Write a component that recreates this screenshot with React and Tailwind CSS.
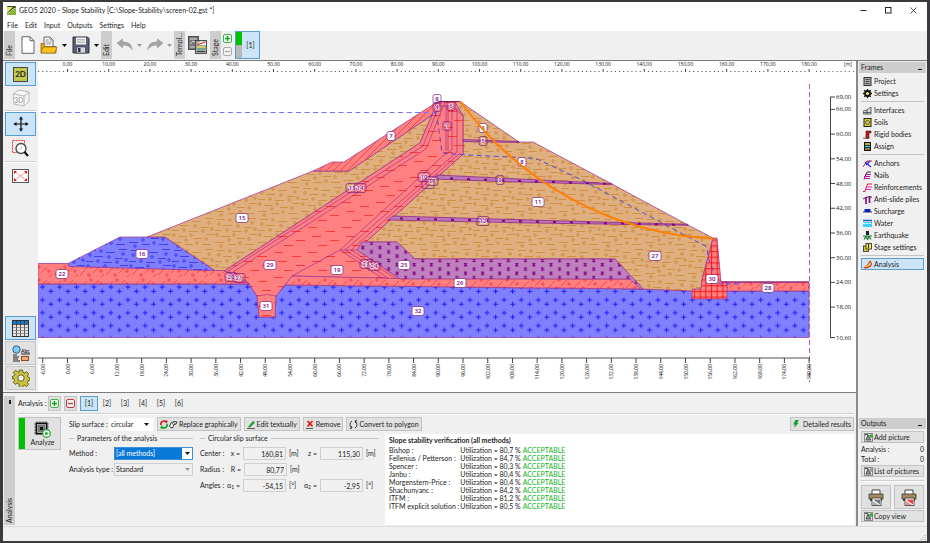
import React from 'react';

const PX = 4.12; // pixels per metre
const X0 = 67.5; // x of 0,00 m
const fmt = (n) => n.toFixed(2).replace('.', ',');

const range = (from, to, step) => {
    const out = [];
    for (let v = from; v <= to; v += step) out.push(v);
    return out;
};

/* ---------- small building blocks ---------- */

const Divider = () => <div className="h-[2px] shrink-0 border-b border-white bg-[#cfcfcf]" />;

const VerticalLabel = ({ children }) => (
    <div className="flex w-[11px] shrink-0 justify-center self-stretch bg-[#cdcdcd] pb-[3px]">
        <span className="rotate-180 text-start leading-[11px] [writing-mode:vertical-rl]">{children}</span>
    </div>
);

const Button = ({ className = '', children, ...rest }) => (
    <button
        type="button"
        className={`flex items-center border border-[#c3c3c3] bg-[#e1e1e1] whitespace-nowrap ${className}`}
        {...rest}
    >
        {children}
    </button>
);

const Arrow = ({ color = '#111' }) => (
    <svg width="5" height="3" viewBox="0 0 5 3" className="shrink-0">
        <path d="M0 0h5L2.500 3z" fill={color} />
    </svg>
);

const PlusIcon = () => (
    <svg width="9" height="9" viewBox="0 0 9 9">
        <rect x=".5" y=".5" width="8" height="8" rx="1.500" fill="#f4fff4" stroke="#3fae49" />
        <path d="M4.500 2v5M2 4.500h5" stroke="#12a01f" strokeWidth="1.400" />
    </svg>
);

const MinusIcon = ({ color = '#c0393f' }) => (
    <svg width="9" height="9" viewBox="0 0 9 9">
        <rect x=".5" y=".5" width="8" height="8" rx="1.500" fill="#f7f2f2" stroke={color} />
        <path d="M2 4.500h5" stroke={color} strokeWidth="1.300" />
    </svg>
);

/* ---------- title, menu, toolbar ---------- */

const TitleBar = () => (
    <header className="flex h-[17px] items-center bg-white pl-1">
        <svg width="9" height="9" viewBox="0 0 9 9" className="mr-[3px]">
            <rect width="9" height="9" rx="1" fill="#2f4a1c" />
            <path d="M0 1h6L1 6H0z" fill="#e4e86a" />
            <path d="M0 7C4 7 4 3 9 2v5.500Q9 9 8 9H1Q0 9 0 8z" fill="#8cb43a" />
            <path d="M0 7C4 7 4 3 9 2" stroke="#fff" strokeWidth=".7" fill="none" />
        </svg>
        <h1 className="grow">GEO5 2020 - Slope Stability [C:\Slope-Stability\screen-02.gst *]</h1>
        <div className="flex gap-[13px] pr-2">
            <button type="button" aria-label="Minimize" className="flex size-3 items-center justify-center">
                <svg width="7" height="7" viewBox="0 0 7 7"><path d="M.5 3.500h6" stroke="#222" /></svg>
            </button>
            <button type="button" aria-label="Maximize" className="flex size-3 items-center justify-center">
                <svg width="7" height="7" viewBox="0 0 7 7"><rect x=".5" y=".5" width="5.500" height="5.500" fill="none" stroke="#222" /></svg>
            </button>
            <button type="button" aria-label="Close" className="flex size-3 items-center justify-center">
                <svg width="7" height="7" viewBox="0 0 7 7"><path d="M.5.5l6 6M6.500.5l-6 6" stroke="#222" strokeWidth=".8" /></svg>
            </button>
        </div>
    </header>
);

const MenuBar = () => (
    <nav className="flex h-3 items-center gap-[7px] bg-white pl-1">
        {['File', 'Edit', 'Input', 'Outputs', 'Settings', 'Help'].map((m) => (
            <button key={m} type="button">{m}</button>
        ))}
    </nav>
);

const NewIcon = () => (
    <svg width="14" height="18" viewBox="0 0 14 18">
        <path d="M1 .7h8l4 4v12.600H1z" fill="#fff" stroke="#555" strokeWidth=".9" />
        <path d="M9 .7v4h4" fill="none" stroke="#555" strokeWidth=".9" />
    </svg>
);

const OpenIcon = () => (
    <svg width="18" height="18" viewBox="0 0 18 18">
        <path d="M4 12V1h6l3 3v9" fill="#fff" stroke="#555" strokeWidth=".9" />
        <path d="M10 1v3h3M5.500 4h3M5.500 6h6M5.500 8h6" fill="none" stroke="#777" strokeWidth=".8" />
        <path d="M1 7.500h3l1 3h11V17H1z" fill="#f0a810" stroke="#7a5a10" strokeWidth=".7" />
        <path d="M3 11h14l-2 6H1z" fill="#ffc21c" stroke="#7a5a10" strokeWidth=".6" />
    </svg>
);

const SaveIcon = () => (
    <svg width="18" height="18" viewBox="0 0 18 18">
        <path d="M1 1h14.500L17 2.500V17H1z" fill="#5a5f78" stroke="#2b2e3c" />
        <rect x="4" y="1.500" width="10" height="7" fill="#f3f3f3" />
        <path d="M5 3.500h8M5 5h8M5 6.500h8" stroke="#999" strokeWidth=".6" />
        <rect x="4.500" y="11" width="9" height="6" fill="#d8d8dc" stroke="#2b2e3c" strokeWidth=".6" />
        <rect x="6" y="12" width="2.500" height="4" fill="#2b2e3c" />
    </svg>
);

const UndoIcon = ({ flip = false }) => (
    <svg width="18" height="14" viewBox="0 0 18 14" className={flip ? '-scale-x-100' : ''}>
        <path d="M.5 5L7 .5v3c6 0 9.500 3 9.500 9.500C14.500 9 12 7.500 7 7.500v3z" fill="#a3a3a3" />
    </svg>
);

const TemplateIcon = () => (
    <svg width="19" height="18" viewBox="0 0 19 18">
        <rect x=".5" y=".5" width="10" height="13" fill="#777" stroke="#333" strokeWidth=".8" />
        <path d="M2 3h7M2 8l3-3 3 2M2 11h5" stroke="#ddd" strokeWidth="1" fill="none" />
        <rect x="7.500" y="4.500" width="11" height="13" fill="#a9a9a9" stroke="#333" strokeWidth=".8" />
        <path d="M9 9l4-4 5 1v3z" fill="#f4f4f4" />
        <path d="M9 9l8-3" stroke="#d33" strokeWidth="1.200" />
        <path d="M9 11h8" stroke="#e8d44a" strokeWidth="1.500" />
        <path d="M9 13h8" stroke="#3a8" strokeWidth="1" />
        <path d="M9 15.500h8" stroke="#333" strokeWidth="1" />
    </svg>
);

const Toolbar = () => (
    <div className="flex h-[30px] items-center border-b border-[#7c7c7c] bg-[#f0f0f0] pb-px pl-px">
        <VerticalLabel>File</VerticalLabel>
        <div className="flex w-[86px] items-center justify-between pr-[2px] pl-[6px]">
            <button type="button" aria-label="New"><NewIcon /></button>
            <button type="button" aria-label="Open"><OpenIcon /></button>
            <Arrow />
            <button type="button" aria-label="Save"><SaveIcon /></button>
            <Arrow />
        </div>
        <VerticalLabel>Edit</VerticalLabel>
        <div className="flex w-[62px] items-center justify-between pr-[2px] pl-1">
            <button type="button" aria-label="Undo"><UndoIcon /></button>
            <Arrow color="#9a9a9a" />
            <button type="button" aria-label="Redo"><UndoIcon flip /></button>
            <Arrow color="#9a9a9a" />
        </div>
        <VerticalLabel>Templ...</VerticalLabel>
        <button type="button" aria-label="Templates" className="px-[3px]"><TemplateIcon /></button>
        <VerticalLabel>Stage</VerticalLabel>
        <div className="flex flex-col gap-1 px-[2px]">
            <button type="button" aria-label="Add stage"><PlusIcon /></button>
            <button type="button" aria-label="Remove stage"><MinusIcon color="#a9a9a9" /></button>
        </div>
        <button type="button" className="ml-px flex w-[25px] self-stretch border border-[#5a9bd0] bg-[#cce4f7]">
            <span className="flex h-full w-[6px] flex-col">
                <span className="grow bg-[#00c000]" />
                <span className="grow bg-[#b9b9b9]" />
            </span>
            <span className="grow self-center">[1]</span>
        </button>
    </div>
);

/* ---------- left tools ---------- */

const Tool = ({ label, active, raised, children }) => (
    <button
        type="button"
        aria-label={label}
        className={`flex h-6 w-full shrink-0 items-center justify-center border ${
            active ? 'border-[#5a9bd0] bg-[#cce4f7]' : raised ? 'border-[#c6c6c6] bg-[#e1e1e1]' : 'border-transparent'
        }`}
    >
        {children}
    </button>
);

const LeftTools = () => (
    <div className="flex w-[35px] shrink-0 flex-col bg-[#f0f0f0] px-[2px] pt-px pb-[2px]">
        <Tool label="2D" active>
            <span className="flex size-[15px] items-center justify-center border border-[#444] bg-[#c6c84a] text-[8px] leading-none font-bold text-[#222]">2D</span>
        </Tool>
        <Tool label="3D">
            <svg width="18" height="18" viewBox="0 0 18 18" fill="none" stroke="#b0b0b0" strokeWidth=".9">
                <path d="M1 5l11 2v10L2 15zM1 5l6-4 10 2-5 4M17 3v9l-5 5" fill="#f8f8f8" />
                <text x="2" y="14" fontSize="7" fontWeight="700" fill="#aaa" stroke="none">3D</text>
            </svg>
        </Tool>
        <Divider />
        <Tool label="Pan" active>
            <svg width="16" height="16" viewBox="0 0 16 16" stroke="#111" fill="#111">
                <path d="M8 2v12M2 8h12" strokeWidth="1.200" />
                <path d="M8 .3L10 3.500H6zM8 15.700L6 12.500h4zM.3 8L3.500 6v4zM15.700 8L12.500 10V6z" stroke="none" />
            </svg>
        </Tool>
        <Tool label="Zoom window">
            <svg width="17" height="17" viewBox="0 0 17 17" fill="none">
                <rect x=".5" y=".5" width="12" height="12" stroke="#f22" strokeDasharray="2 1" />
                <circle cx="9" cy="8.500" r="5" stroke="#444" strokeWidth="1.300" fill="#fff" />
                <path d="M6.500 9h3V6" stroke="#ccc" />
                <path d="M12.500 12l3.500 4" stroke="#111" strokeWidth="2" />
            </svg>
        </Tool>
        <div className="my-px"><Divider /></div>
        <Tool label="Fit to view">
            <svg width="17" height="14" viewBox="0 0 17 14" fill="none">
                <rect x=".5" y=".5" width="16" height="13" fill="#fff" stroke="#555" />
                <path d="M3 3l11 8M14 3L3 11" stroke="#f55" strokeWidth=".8" strokeDasharray="3 1" />
                <path d="M2 2h3L2 5zM15 2v3l-3-3zM2 12V9l3 3zM15 12h-3l3-3z" fill="#f00" />
            </svg>
        </Tool>
        <div className="mt-auto flex flex-col gap-px">
            <Tool label="Table" active>
                <svg width="17" height="17" viewBox="0 0 17 17">
                    <rect x=".5" y=".5" width="16" height="16" fill="#e6e6e6" stroke="#333" />
                    <rect x="1" y="1" width="15" height="3" fill="#1477c8" />
                    <path d="M4.500 1v15M8.500 1v15M12.500 1v15M1 4.500h15" stroke="#333" strokeWidth=".8" />
                    <path d="M1 7.500h15M1 10.500h15M1 13.500h15" stroke="#777" strokeWidth=".7" />
                </svg>
            </Tool>
            <Tool label="Drawing settings" raised>
                <svg width="18" height="17" viewBox="0 0 18 17">
                    <circle cx="4.500" cy="4.500" r="3.700" fill="#7cc8ff" stroke="#33658a" />
                    <text x="9" y="8" fontSize="5" fontWeight="700" fill="#222">Abc</text>
                    <path d="M9 9h9M1 10h4M1 12h6M1 14h5M1 16h7" stroke="#222" />
                    <rect x="9.500" y="11.500" width="7" height="4" fill="#f7a877" stroke="#8a4a22" />
                </svg>
            </Tool>
            <Tool label="Settings" raised>
                <svg width="18" height="18" viewBox="0 0 18 18">
                    <g fill="#c9c33e" stroke="#55531a" strokeWidth=".9">
                        <path d="M7.500 1h3l.5 2.300 1.700.7 2-1.200 2 2-1.200 2 .7 1.700 1.800.5v2l-2 .7-.6 1.700 1.200 2-2 2-2-1.200-1.800.8-.5 2H7.500L7 15l-1.700-.8-2 1.200-2-2 1.200-2L1.800 9.700 0 9.200v-1.500l2-.7.6-1.700-1.200-2 2-2 2 1.200L7 3.300z" />
                        <circle cx="9" cy="9" r="3.200" fill="#f0f0f0" />
                    </g>
                </svg>
            </Tool>
        </div>
    </div>
);

/* ---------- model canvas ---------- */

const Gravel = ({ id, color }) => (
    <pattern id={id} width="43" height="31" patternUnits="userSpaceOnUse">
        <g fill="none" stroke={color} strokeWidth=".6">
            <path d="M2 2.500h8M20 4.500h9M33 1.500h8M8 8.500h9M29 10.500h8M0 13.500h7M17 14.500h9M34 17.500h8M6 19.500h9M22 21.500h8M0 25.500h9M13 27.500h8M30 27.500h9" />
            <circle cx="15" cy="3" r="1.300" />
            <circle cx="37" cy="6" r="1.300" />
            <circle cx="4" cy="7" r="1.300" />
            <circle cx="23" cy="9" r="1.300" />
            <circle cx="12" cy="13" r="1.300" />
            <circle cx="31" cy="14" r="1.300" />
            <circle cx="40" cy="12" r="1.300" />
            <circle cx="2" cy="18" r="1.300" />
            <circle cx="19" cy="18" r="1.300" />
            <circle cx="34" cy="22" r="1.300" />
            <circle cx="14" cy="23" r="1.300" />
            <circle cx="25" cy="26" r="1.300" />
            <circle cx="6" cy="29" r="1.300" />
        </g>
    </pattern>
);

const regions = [
    { fill: '#8080ff', hatch: 'url(#plus)', d: 'M38 284H249L257 296L259 317H275L276 296L285 285L460 287L520 288L643 289L692 291H809V337.500H38z' },
    { fill: '#ff8080', hatch: 'url(#clay)', d: 'M38 263.500H68L69 266L215 270.500H225L249 284H38z' },
    { fill: '#8080ff', hatch: 'url(#gravelBlue)', d: 'M68 263.500L120 237H165L215 270.500L69 266.500z' },
    { fill: '#dfaf80', hatch: 'url(#gravel)', d: 'M147 237L313 171H349L432 115L420 143L225 270.500H215L165 237z' },
    { fill: '#ff8080', hatch: 'url(#slant)', d: 'M313 171L332 162H344L437 102L440 104L432 115L349 171z' },
    { fill: '#dfaf80', hatch: 'url(#gravel)', d: 'M460 101.500L519 142H533L612 184L688 225L713 238L702 280L701 289L692 291L643 289L615 259H415L397 242H362L357 250L463 154V116L455 102z' },
    { fill: '#ff8080', hatch: 'url(#dash)', d: 'M225 270.500L420 143L433 113L437 102H455L463 116V154L357 250L400 279L292 276L285 285L276 296L275 317H259L257 296L249 284z' },
    { fill: '#ff8080', hatch: 'url(#clay)', d: 'M292 276L400 278.500L630 279L643 289L460 287L285 285z' },
    { fill: '#bf80bf', hatch: 'url(#star)', d: 'M357 250L362 242H397L415 259H615L643 289H640L630 279H400z' },
    { fill: '#ff8080', hatch: 'url(#clay)', d: 'M721 282H809V291H727z' },
    { fill: '#ff8080', hatch: 'url(#grid)', d: 'M713 238H717L721 282H727V299H692V289H701L702 280z' },
];

// filter layers, core lines and berm boundaries
const seams = [
    'M228 271L423 146L436 113L440 104',
    'M233 272L426 149L441 112L445 103',
    'M225 270.500L240 284M228 271L245 284M233 272L250 284',
    'M340 250L443 156L452 150V106M345 250L457 152V108M351 250L460 153M340 250H357',
    'M340 250L382 278M345 250L388 278M351 250L395 278',
    'M292 276L340 250M258 296Q266 293 276 296',
    'M446 106V151M448 106V151M437 106H452L463 116',
];

const bands = [
    'M463 139.500L519 141.500V142.500L463 141.500z',
    'M437 175L500 178L612 183.500V184.500L500 181.500L434 179z',
    'M393 216L530 220L688 224.300V225.300L530 223L388 220z',
];

const tags = [
    [437, 99, '8', 0], [391, 136, '7', 1], [242, 218, '15', 1], [142, 254, '16', 1], [62, 274, '22', 1],
    [270, 265, '29', 1], [266, 306, '31', 1], [337, 270, '19', 1], [404, 265, '25', 1], [460, 283, '26', 1],
    [418, 311, '32', 1], [538, 202, '11', 1], [655, 256, '27', 1], [712, 279, '30', 1], [768, 288, '28', 1],
    [483, 128, '3', 1], [483, 141, '5', 0], [500, 180, '9', 0], [483, 221, '12', 0], [522, 162, '8', 1],
    [447, 126, '1', 0], [437, 107, '4', 0], [451, 106, '6', 0], [352, 188, '13', 0], [360, 188, '14', 0],
    [424, 177, '10', 0], [432, 181, '17', 0], [428, 184, '', 0], [231, 277, '20', 0], [239, 278, '21', 0],
    [366, 264, '23', 0], [374, 266, '24', 0],
];

const Tag = ({ x, y, text, solid }) => {
    const w = text.length === 1 ? 8 : 12;
    return (
        <g>
            <rect x={x - w / 2} y={y - 4.5} width={w} height="9" rx="2" fill={solid ? '#fff' : 'none'} stroke="#80207f" strokeWidth=".7" />
            <text x={x} y={y + 2} fontSize="6" fontWeight="600" textAnchor="middle" fill="#800080" stroke={solid ? 'none' : '#fff'} strokeWidth="1.200" paintOrder="stroke">{text}</text>
        </g>
    );
};

const ModelCanvas = () => (
    <svg viewBox="38 61 818 331" className="h-auto w-full bg-white font-['Open_Sans',sans-serif]" role="img" aria-label="Slope model">
        <defs>
            <Gravel id="gravel" color="#c87818" />
            <Gravel id="gravelBlue" color="#1010f0" />
            <pattern id="plus" width="17.100" height="12.900" x="209" y="283" patternUnits="userSpaceOnUse">
                <path d="M2 4h5M4.500 1.500v5M10.500 8.300h5M13 5.800v5" stroke="#1010ff" strokeWidth=".9" />
            </pattern>
            <pattern id="star" width="17.100" height="8.600" x="367" y="241" patternUnits="userSpaceOnUse">
                <path d="M3 .8l3 3M6 .8l-3 3M4.500.5v3.600M11.500 5l3 3M14.500 5l-3 3M13 4.700v3.600" stroke="#800080" strokeWidth="1" />
            </pattern>
            <pattern id="dash" width="34" height="25" patternUnits="userSpaceOnUse">
                <path d="M2 2.500h9M20 6.500h9M6 11.500h9M24 15.500h9M12 20.500h9" stroke="#ff1818" strokeWidth=".7" />
            </pattern>
            <pattern id="clay" width="26" height="13" y="264" patternUnits="userSpaceOnUse">
                <g fill="none" stroke="#ff1818" strokeWidth=".6">
                    <path d="M2 11L9 4M15 9l6-6M23 13l3-3" />
                    <circle cx="13" cy="3" r="1.200" />
                    <circle cx="11" cy="11" r="1.200" />
                    <circle cx="23" cy="7" r="1.200" />
                </g>
            </pattern>
            <pattern id="slant" width="7" height="7" patternUnits="userSpaceOnUse">
                <path d="M-1 8L8-1M-1 1l2-2M6 8l2-2" stroke="#e82020" strokeWidth=".6" />
            </pattern>
            <pattern id="grid" width="5.700" height="5.700" x="692" y="289" patternUnits="userSpaceOnUse">
                <path d="M0 2.500h5.700M2.500 0v5.700" stroke="#ff0000" strokeWidth=".8" />
            </pattern>
        </defs>

        {regions.map((r) => (
            <g key={r.d}>
                <path d={r.d} fill={r.fill} />
                <path d={r.d} fill={r.hatch} stroke="#98308f" strokeWidth=".7" />
            </g>
        ))}
        {seams.map((d) => <path key={d} d={d} fill="none" stroke="#98208f" strokeWidth=".6" />)}
        {bands.map((d) => <path key={d} d={d} fill="#b878b8" stroke="#800080" strokeWidth=".6" />)}
        <path d="M450 178.500L612 184M400 218.500L688 225" stroke="#800080" strokeWidth="2" strokeDasharray="3 14" />

        {/* water table */}
        <path d="M41 112.500H435" stroke="#7474ff" strokeDasharray="5 3.500" fill="none" />
        <path d="M435 112L438 123L442 153L467 155L530 158L537 159L580 179L707 247L708 257L717 280L720 284H740" stroke="#4040e0" strokeWidth=".9" strokeDasharray="5 3.500" fill="none" />

        <path d="M437 101.500H460M721 282H809" stroke="#80106a" strokeWidth="1.200" />
        <path d="M809.500 84V382" stroke="#b060b0" strokeDasharray="5 3" />

        {tags.map(([x, y, t, solid]) => <Tag key={`${x}-${y}`} x={x} y={y} text={t} solid={solid} />)}

        {/* critical slip surface, R = 80,77 m */}
        <path d="M460 101A332.800 332.800 0 0 0 713 238.500" fill="none" stroke="#ff8000" strokeWidth="2" />

        {/* top ruler */}
        <g fill="#111" fontSize="5" textAnchor="middle">
            {range(-7, 180, 1).map((v) => (
                <path key={v} d={`M${X0 + v * PX} ${v % 10 === 0 ? 69 : 71}V72`} stroke="#333" strokeWidth=".9" />
            ))}
            {range(0, 180, 10).map((v) => <text key={v} x={X0 + v * PX} y="66">{fmt(v)}</text>)}
            <text x="848" y="66">[m]</text>
            <path d="M816 71.500H856" stroke="#555" strokeDasharray="1 3.100" />
        </g>

        {/* elevation ruler */}
        <g fill="#111" fontSize="6" stroke="none">
            <path d="M830.500 97V337.500" stroke="#444" />
            {[69, 66, 60, 54, 48, 42, 36, 30, 24, 18, 10.6].map((v) => (
                <g key={v}>
                    <path d={`M830 ${97 + (69 - v) * PX}h5`} stroke="#444" />
                    <text x="836" y={99 + (69 - v) * PX}>{fmt(v)}</text>
                </g>
            ))}
        </g>

        {/* bottom ruler */}
        <g fill="#111" fontSize="5" textAnchor="end">
            <path d="M38 358H809" stroke="#555" />
            {range(-6, 180, 6).map((v) => (
                <g key={v}>
                    <path d={`M${X0 + v * PX} 358v5`} stroke="#444" />
                    <text transform={`translate(${X0 + v * PX + 2} 364) rotate(-90)`}>{fmt(v)}</text>
                </g>
            ))}
        </g>
    </svg>
);

/* ---------- analysis panel ---------- */

const GroupTitle = ({ children }) => (
    <h2 className="flex items-center gap-[3px] whitespace-nowrap">
        <span className="h-px w-[5px] bg-[#c4c4c4]" />
        {children}
        <span className="h-px grow bg-[#c4c4c4]" />
    </h2>
);

const NumberField = ({ id, label, value, unit }) => (
    <div className="flex items-center">
        <label htmlFor={id} className="w-[17px] shrink-0 pr-[3px] text-right whitespace-nowrap">{label} =</label>
        <input
            id={id}
            readOnly
            defaultValue={value}
            className="h-[13px] w-[43px] border border-[#cfcfcf] bg-[#f0f0f0] px-[2px] text-right"
        />
        <span className="w-[15px] pl-[3px]">{unit}</span>
    </div>
);

const results = [
    ['Bishop :', '80,7'],
    ['Fellenius / Petterson :', '84,7'],
    ['Spencer :', '80,3'],
    ['Janbu :', '80,4'],
    ['Morgenstern-Price :', '80,4'],
    ['Shachunyanc :', '84,2'],
    ['ITFM :', '81,2'],
    ['ITFM explicit solution :', '80,5'],
];

const AnalysisPanel = () => (
    <section className="flex h-[134px] border-t border-[#7c7c7c] bg-[#f0f0f0] pt-[3px] pr-[2px] pb-px pl-px">
        <div className="flex w-[11px] shrink-0 flex-col items-center justify-between bg-[#cdcdcd] pt-1 pb-[2px]">
            <span className="h-1 w-[2px] bg-[#222]" />
            <span className="rotate-180 leading-[11px] [writing-mode:vertical-rl]">Analysis</span>
        </div>
        <div className="ml-[3px] flex min-w-0 grow flex-col">
            <div className="flex h-[15px] items-center gap-[3px]">
                <span className="w-[27px] whitespace-nowrap">Analysis :</span>
                <Button aria-label="Add analysis" className="h-[15px] w-[13px] justify-center"><PlusIcon /></Button>
                <Button aria-label="Remove analysis" className="h-[15px] w-[13px] justify-center"><MinusIcon /></Button>
                <div className="flex">
                    {[1, 2, 3, 4, 5, 6].map((n) => (
                        <button
                            key={n}
                            type="button"
                            className={`h-[15px] w-[18px] border ${n === 1 ? 'border-[#5a9bd0] bg-[#cce4f7]' : 'border-transparent'}`}
                        >
                            [{n}]
                        </button>
                    ))}
                </div>
            </div>
            <div className="mt-[2px]"><Divider /></div>

            <div className="mt-[2px] flex grow gap-2">
                <Button className="h-[33px] w-[43px] shrink-0">
                    <span className="h-full w-[6px] bg-[#00c000]" />
                    <span className="flex grow flex-col items-center">
                        <svg width="17" height="17" viewBox="0 0 17 17">
                            <path d="M3 0v14M6 0v14M9 0v14M12 0v14M0 3h15M0 6h15M0 9h15M0 12h15" stroke="#555" strokeWidth=".8" />
                            <rect x="1.500" y="1.500" width="12" height="12" fill="#111" />
                            <rect x="3.500" y="3.500" width="8" height="8" fill="#777" stroke="#ccc" strokeWidth=".7" />
                            <rect x="6" y="6" width="3" height="3" fill="#111" />
                            <circle cx="12.500" cy="12.500" r="3.800" fill="#fff" stroke="#12a01f" strokeWidth="1.200" />
                            <path d="M11.300 10.500l3.500 2-3.500 2z" fill="#12a01f" />
                        </svg>
                        <span className="leading-[9px]">Analyze</span>
                    </span>
                </Button>

                <div className="flex min-w-0 grow flex-col">
                    <div className="flex h-[14px] items-center gap-[3px]">
                        <label htmlFor="slip" className="w-[37px] whitespace-nowrap">Slip surface :</label>
                        <div className="relative mr-px">
                            <select id="slip" defaultValue="circular" className="block h-[13px] w-[44px] appearance-none bg-white pl-[2px]">
                                <option>circular</option>
                                <option>polygonal</option>
                            </select>
                            <span className="pointer-events-none absolute top-[5px] right-1"><Arrow /></span>
                        </div>
                        <Button className="h-[14px] gap-px px-[2px]">
                            <svg width="18" height="9" viewBox="0 0 18 9" fill="none">
                                <path d="M1 5a3 3 0 0 1 5-3" stroke="#c22" strokeWidth="1.600" />
                                <path d="M7 4a3 3 0 0 1-5 3" stroke="#12a01f" strokeWidth="1.600" />
                                <path d="M5 0l3 1-2 3z" fill="#c22" />
                                <path d="M3 9L0 8l2-3z" fill="#12a01f" />
                                <path d="M9.500 6.500L11 3l3-1.500 3 .5-1 2-2 .5-1.500 3.500-1.500-.5z" fill="#fff" stroke="#222" strokeWidth=".9" />
                                <path d="M12 3.500l1.500 1M13.500 2.500l1.500 1" stroke="#222" strokeWidth=".8" />
                            </svg>
                            Replace graphically
                        </Button>
                        <Button className="h-[14px] gap-px px-[2px]">
                            <svg width="9" height="9" viewBox="0 0 9 9">
                                <path d="M1 7l5-6 2 1.500-5 5z" fill="#1a9a2a" />
                                <path d="M0 8.500h8" stroke="#333" strokeWidth=".8" />
                            </svg>
                            Edit textually
                        </Button>
                        <Button className="h-[14px] gap-[2px] px-[2px]">
                            <svg width="8" height="9" viewBox="0 0 8 9">
                                <path d="M1.500 1l5 5.500M6.500 1l-5 5.500" stroke="#e01010" strokeWidth="1.600" />
                                <path d="M0 8.500h7" stroke="#333" strokeWidth=".8" />
                            </svg>
                            Remove
                        </Button>
                        <Button className="h-[14px] gap-px px-[2px]">
                            <svg width="9" height="9" viewBox="0 0 9 9" fill="none" stroke="#222" strokeWidth=".9">
                                <path d="M3 1Q1 2 1 4.500T3 8M6 1q2 1 2 3.500T6 8" />
                                <path d="M2 6l1 2-2 .5M7 3L6 1l2-.5" />
                            </svg>
                            Convert to polygon
                        </Button>
                        <Button className="ml-auto h-[14px] gap-1 px-[2px]">
                            <svg width="6" height="8" viewBox="0 0 6 8"><path d="M2.500 0H6L4 3h1.500L1 8l1-3.500H0z" fill="#12a01f" /></svg>
                            Detailed results
                        </Button>
                    </div>

                    <div className="mt-[3px] flex grow gap-[7px]">
                        <div className="w-[124px] shrink-0">
                            <GroupTitle>Parameters of the analysis</GroupTitle>
                            <div className="mt-1 flex flex-col gap-[3px]">
                                <div className="flex items-center">
                                    <label htmlFor="method" className="w-[45px]">Method :</label>
                                    <div className="relative grow">
                                        <select id="method" defaultValue="[all methods]" className="block h-[13px] w-full appearance-none border border-[#3c8fd8] bg-white bg-linear-to-r from-[#0a78d7] from-[67px] to-white to-[67px] bg-no-repeat pl-px text-white">
                                            <option>[all methods]</option>
                                            <option>Bishop</option>
                                        </select>
                                        <span className="pointer-events-none absolute top-[5px] right-[3px]"><Arrow /></span>
                                    </div>
                                </div>
                                <div className="flex items-center">
                                    <label htmlFor="type" className="w-[45px] whitespace-nowrap">Analysis type :</label>
                                    <div className="relative grow">
                                        <select id="type" defaultValue="Standard" className="block h-[13px] w-full appearance-none border border-[#cfcfcf] bg-[#f0f0f0] pl-px">
                                            <option>Standard</option>
                                            <option>Optimization</option>
                                        </select>
                                        <span className="pointer-events-none absolute top-[5px] right-[3px]"><Arrow color="#999" /></span>
                                    </div>
                                </div>
                            </div>
                        </div>

                        <div className="w-[178px] shrink-0">
                            <GroupTitle>Circular slip surface</GroupTitle>
                            <div className="mt-1 flex flex-col gap-[3px]">
                                <div className="flex items-center">
                                    <span className="w-[27px]">Center :</span>
                                    <NumberField id="cx" label="x" value="160,81" unit="[m]" />
                                    <span className="w-[2px]" />
                                    <NumberField id="cz" label="z" value="115,30" unit="[m]" />
                                </div>
                                <div className="flex items-center">
                                    <span className="w-[27px]">Radius :</span>
                                    <NumberField id="radius" label="R" value="80,77" unit="[m]" />
                                </div>
                                <div className="flex items-center">
                                    <span className="w-[27px]">Angles :</span>
                                    <NumberField id="a1" label={<>α<sub>1</sub></>} value="-54,15" unit="[°]" />
                                    <span className="w-[2px]" />
                                    <NumberField id="a2" label={<>α<sub>2</sub></>} value="-2,95" unit="[°]" />
                                </div>
                            </div>
                        </div>

                        <div className="grow bg-white px-1 pt-[2px] leading-[8px]">
                            <table className="border-collapse">
                                <caption className="pb-[2px] text-left font-bold whitespace-nowrap">Slope stability verification (all methods)</caption>
                                <tbody>
                                    {results.map(([name, value]) => (
                                        <tr key={name}>
                                            <th scope="row" className="w-[70px] p-0 pr-px text-left font-normal whitespace-nowrap">{name}</th>
                                            <td className="p-0 pr-[2px] whitespace-nowrap">Utilization = {value} %</td>
                                            <td className="p-0 text-[#12b422]">ACCEPTABLE</td>
                                        </tr>
                                    ))}
                                </tbody>
                            </table>
                        </div>
                    </div>
                </div>
            </div>
        </div>
    </section>
);

/* ---------- right side ---------- */

const frameIcons = {
    Project: <><rect x="1" y=".5" width="7" height="8" fill="#aaa" stroke="#333" /><path d="M2.500 2.500h4M2.500 4.500h4M2.500 6.500h4" stroke="#333" strokeWidth=".8" /></>,
    Settings: <><circle cx="4.500" cy="4.500" r="3.400" fill="#111" /><path d="M4.500 0v9M0 4.500h9M1.300 1.300l6.400 6.400M7.700 1.300L1.300 7.700" stroke="#111" strokeWidth="1.300" /><circle cx="4.500" cy="4.500" r="1.600" fill="#f4e84a" /></>,
    Interfaces: <><path d="M0 8V5l4-1 4-3v7zM0 6.500h8M4 4v4" fill="#ddd" stroke="#444" strokeWidth=".8" /></>,
    Soils: <><rect x="1" y=".5" width="7" height="8" fill="#d8d030" stroke="#222" /><circle cx="4.500" cy="4.500" r="2" fill="none" stroke="#555" /></>,
    'Rigid bodies': <><path d="M0 8h3V1h5v2H6v5.500H3" fill="#d01010" stroke="#222" strokeWidth=".6" /></>,
    Assign: <><rect x="1" y="0" width="7" height="9" fill="#111" /><path d="M2 2h5" stroke="#f0e030" strokeWidth="1.500" /><path d="M2 4.500h5" stroke="#30d0f0" strokeWidth="1.500" /><path d="M2 7h5" stroke="#e0c030" strokeWidth="1.200" /></>,
    Anchors: <><path d="M0 8l4-6h5" stroke="#d02020" fill="none" /><path d="M2 3l6 5M3 6l4-4" stroke="#2030e0" strokeWidth="1.300" /></>,
    Nails: <><path d="M1 8.500L4 1h4" stroke="#333" fill="none" /><path d="M2 3.500h6M1 5.500h6M1 7.500h6" stroke="#c010c0" strokeWidth="1.100" /></>,
    Reinforcements: <><path d="M0 8.500h2L4.500 1H9" stroke="#d02020" fill="none" /><path d="M3.500 4h5.500M2 6.500h6" stroke="#f020c0" /></>,
    'Anti-slide piles': <><path d="M0 4l4-2h5" stroke="#333" fill="none" /><path d="M3 2v7M6.500 1v7" stroke="#801080" strokeWidth="1.700" /></>,
    Surcharge: <><path d="M0 5h9" stroke="#333" /><path d="M1.500 2h6v3h-6z" fill="#1020d0" /><path d="M1 7h7" stroke="#fff" strokeWidth="2" /></>,
    Water: <><path d="M0 1.500h9" stroke="#1060d0" strokeWidth="1.500" /><path d="M0 3h9v5H0z" fill="#40d0ff" /><path d="M0 4.500h9" stroke="#fff" strokeDasharray="2 1" /></>,
    Earthquake: <><path d="M3 0h3v4H3z" fill="#222" /><path d="M0 5h9M1 8.500l2-3 1.500 3 1.500-3 2 3" stroke="#197a30" strokeWidth="1.200" fill="none" /></>,
    'Stage settings': <><rect x=".5" y="3" width="5" height="5.500" fill="#d8d030" stroke="#222" strokeWidth=".8" /><rect x="3" y=".5" width="5.500" height="5.500" fill="#f4e84a" stroke="#222" strokeWidth=".8" /><path d="M5.500 1v4" stroke="#222" /></>,
    Analysis: <><path d="M0 7.500C4 7 5 3 7 .5c2.500 2 2.500 5 0 6.500-2 1.500-5 2-7 .5z" fill="#e02020" /><path d="M2 7c2.500-.5 4-3 5-5 1.200 1.500 1 3-.5 4S3.500 7.500 2 7z" fill="#ffe030" /></>,
};

const frameGroups = [
    ['Project', 'Settings'],
    ['Interfaces', 'Soils', 'Rigid bodies', 'Assign'],
    ['Anchors', 'Nails', 'Reinforcements', 'Anti-slide piles', 'Surcharge', 'Water', 'Earthquake', 'Stage settings'],
    ['Analysis'],
];

const SideTitle = ({ children }) => (
    <h2 className="flex h-[11px] items-center justify-between bg-[#cdcdcd] px-[2px]">
        {children}
        <span className="mt-[3px] mr-[2px] h-px w-1 bg-[#111]" />
    </h2>
);

const PictureIcon = ({ mark }) => (
    <svg width="9" height="9" viewBox="0 0 9 9" className="shrink-0">
        <rect x=".5" y=".5" width="8" height="8" fill="#e8e8e8" stroke="#888" />
        <path d="M2 7l2-5 1.500 3L7 7zM1 1.500h3" stroke="#333" strokeWidth=".8" fill="#999" />
        <path d="M7 1v4M5 3h4" stroke={mark} strokeWidth="1.200" />
    </svg>
);

const PrinterIcon = ({ accent }) => (
    <svg width="16" height="17" viewBox="0 0 16 17">
        <path d="M4 5V1h8v4" fill="#fff" stroke="#333" strokeWidth=".9" />
        <path d="M1 5h14v5H1z" fill="#a58a5c" stroke="#333" strokeWidth=".8" />
        <path d="M2 10h12v2H2z" fill="#444" />
        <rect x="4" y="9" width="9" height="7.500" fill="#fff" stroke="#333" strokeWidth=".8" />
        <path d="M5 10.500h7v5z" fill={accent} />
        <path d="M5 12l6 4H5z" fill={accent} opacity=".6" />
    </svg>
);

const SidePanel = () => (
    <aside className="flex w-[71px] shrink-0 flex-col border-l-2 border-[#8a8a8a] bg-[#f0f0f0] px-px pt-px pb-1">
        <SideTitle>Frames</SideTitle>
        <div className="flex flex-col gap-[2px] px-[2px] pt-[2px]">
            {frameGroups.map((group, i) => (
                <React.Fragment key={group[0]}>
                    {i > 0 && <div className="h-px bg-[#c4c4c4]" />}
                    <div>
                        {group.map((name) => (
                            <button
                                key={name}
                                type="button"
                                className={`flex h-3 w-full items-center gap-[2px] border pl-px whitespace-nowrap ${
                                    name === 'Analysis' ? 'border-[#5a9bd0] bg-[#cce4f7]' : 'border-transparent'
                                }`}
                            >
                                <svg width="9" height="9" viewBox="0 0 9 9" fill="none" className="shrink-0">{frameIcons[name]}</svg>
                                {name}
                            </button>
                        ))}
                    </div>
                </React.Fragment>
            ))}
        </div>

        <div className="mt-auto">
            <SideTitle>Outputs</SideTitle>
            <div className="flex flex-col px-[2px] pt-[2px]">
                <Button className="h-3 gap-px pl-[2px]"><PictureIcon mark="#12a01f" />Add picture</Button>
                <div className="flex h-[11px] items-end justify-between"><span>Analysis :</span><span>0</span></div>
                <div className="mb-px flex h-[10px] items-end justify-between"><span>Total :</span><span>0</span></div>
                <Button className="h-3 gap-px pl-[2px]"><PictureIcon mark="#888" />List of pictures</Button>
                <div className="py-[3px]"><Divider /></div>
                <div className="mb-px grid grid-cols-2 gap-[3px]">
                    <Button aria-label="Print" className="h-6 justify-center"><PrinterIcon accent="#777" /></Button>
                    <Button aria-label="Print PDF" className="h-6 justify-center"><PrinterIcon accent="#f04040" /></Button>
                </div>
                <Button className="h-3 gap-px pl-[2px]"><PictureIcon mark="#12a01f" />Copy view</Button>
            </div>
        </div>
    </aside>
);

const App = () => (
    <div className="flex min-h-screen flex-col border-x-[3px] border-y-2 border-[#3a3a3c] bg-[#f0f0f0] font-['Lato',sans-serif] text-[7px] leading-[9px] text-[#1c1c1c]">
        <TitleBar />
        <MenuBar />
        <Toolbar />
        <main className="flex">
            <div className="flex min-w-0 grow flex-col">
                <div className="flex">
                    <LeftTools />
                    <div className="min-w-0 grow"><ModelCanvas /></div>
                </div>
                <AnalysisPanel />
            </div>
            <SidePanel />
        </main>
        <footer className="flex grow items-end justify-end border-t border-[#dcdcdc] p-px">
            <svg width="6" height="6" viewBox="0 0 6 6"><path d="M5 1v1M5 3v1M3 3v1M5 5v1M3 5v1M1 5v1" stroke="#aaa" /></svg>
        </footer>
    </div>
);

export default App;
